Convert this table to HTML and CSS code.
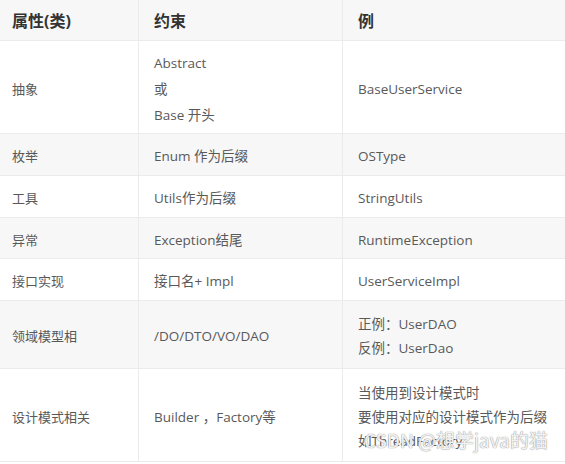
FILE: index.html
```html
<!DOCTYPE html>
<html lang="zh">
<head>
<meta charset="utf-8">
<link rel="stylesheet" href="styles.css">
</head>
<body>
<div class="table">
  <div class="row head h41">
    <div class="cell c1">属性(类)</div>
    <div class="cell c2">约束</div>
    <div class="cell c3">例</div>
  </div>
  <div class="row h93 tall">
    <div class="cell c1">抽象</div>
    <div class="cell c2"><span>Abstract</span><span>或</span><span>Base 开头</span></div>
    <div class="cell c3">BaseUserService</div>
  </div>
  <div class="row alt h42">
    <div class="cell c1">枚举</div>
    <div class="cell c2">Enum 作为后缀</div>
    <div class="cell c3">OSType</div>
  </div>
  <div class="row h42">
    <div class="cell c1">工具</div>
    <div class="cell c2">Utils作为后缀</div>
    <div class="cell c3">StringUtils</div>
  </div>
  <div class="row alt h41">
    <div class="cell c1">异常</div>
    <div class="cell c2">Exception结尾</div>
    <div class="cell c3">RuntimeException</div>
  </div>
  <div class="row h42">
    <div class="cell c1">接口实现</div>
    <div class="cell c2">接口名+ Impl</div>
    <div class="cell c3">UserServiceImpl</div>
  </div>
  <div class="row alt h68">
    <div class="cell c1">领域模型相</div>
    <div class="cell c2">/DO/DTO/VO/DAO</div>
    <div class="cell c3"><span>正例：UserDAO</span><span>反例：UserDao</span></div>
  </div>
  <div class="row h93 last">
    <div class="cell c1">设计模式相关</div>
    <div class="cell c2">Builder ，Factory等</div>
    <div class="cell c3"><span>当使用到设计模式时</span><span>要使用对应的设计模式作为后缀</span><span>如ThreadFactory</span></div>
  </div>
</div>
<div class="watermark">CSDN @想学java的猫</div>
</body>
</html>
```

FILE: styles.css
```css
html, body {
  margin: 0;
  padding: 0;
  background: #ffffff;
}
body {
  width: 565px;
  height: 464px;
  overflow: hidden;
  position: relative;
  font-family: "Open Sans", "Noto Sans CJK SC", sans-serif;
  font-size: 13.5px;
  color: #595959;
}
.table {
  display: flex;
  flex-direction: column;
}
.row {
  display: grid;
  grid-template-columns: 139px 204px 1fr;
  border-bottom: 1px solid #ebebeb;
  box-sizing: border-box;
  background: #ffffff;
}
.row.alt, .row.head {
  background: #f7f7f7;
}
.h41 { height: 41px; }
.h42 { height: 42px; }
.h68 { height: 68px; }
.h93 { height: 93px; }
.cell {
  display: flex;
  flex-direction: column;
  justify-content: center;
  box-sizing: border-box;
  line-height: 24px;
  padding-top: 3px;
}
.c1 {
  padding-left: 12px;
  border-right: 1px solid #ebebeb;
  font-size: 13px;
}
.c2 {
  padding-left: 15px;
  border-right: 1px solid #ebebeb;
}
.c3 {
  padding-left: 15px;
}
.tall .cell {
  line-height: 26px;
}
.head .cell {
  font-weight: bold;
  font-size: 16px;
  color: #333333;
  padding-top: 1px;
}
.watermark {
  position: absolute;
  right: 17px;
  top: 426px;
  font-family: "Noto Sans CJK SC", "Open Sans", sans-serif;
  font-size: 19px;
  color: rgba(255, 255, 255, 0.9);
  text-shadow: 0 0 1px #999, 0 0 1px #999;
}
```
